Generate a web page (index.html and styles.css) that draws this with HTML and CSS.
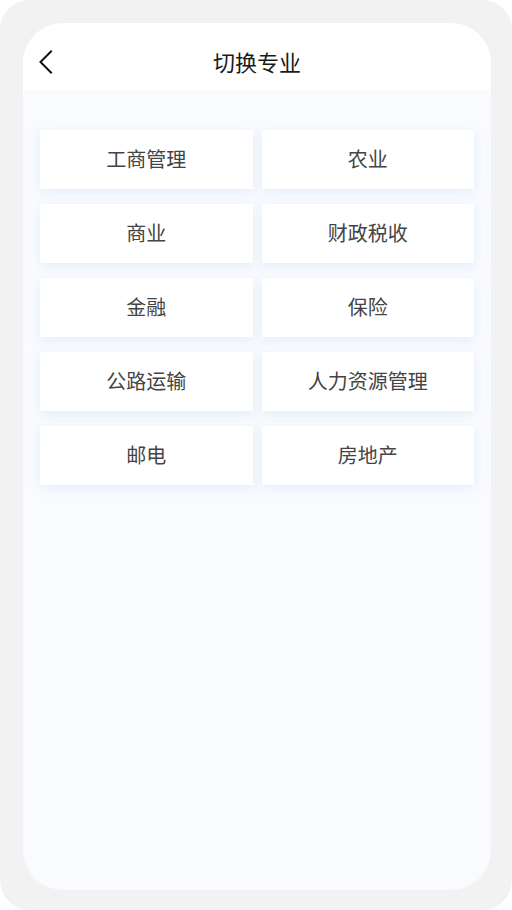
FILE: index.html
```html
<!DOCTYPE html>
<html lang="zh">
<head>
<meta charset="utf-8">
<title>切换专业</title>
<link rel="stylesheet" href="styles.css">
</head>
<body>
<div class="frame">
  <div class="phone">
    <header class="header">
      <div class="back">
        <svg width="16" height="24" viewBox="0 0 16 24" aria-hidden="true">
          <path d="M13 1.5 L2.5 12 L13 22.5" fill="none" stroke="#111" stroke-width="2" stroke-linecap="square" stroke-linejoin="miter"/>
        </svg>
      </div>
      <h1 class="title">切换专业</h1>
      <div class="spacer"></div>
    </header>
    <main class="grid">
      <div class="card">工商管理</div>
      <div class="card">农业</div>
      <div class="card">商业</div>
      <div class="card">财政税收</div>
      <div class="card">金融</div>
      <div class="card">保险</div>
      <div class="card">公路运输</div>
      <div class="card">人力资源管理</div>
      <div class="card">邮电</div>
      <div class="card">房地产</div>
    </main>
  </div>
</div>
</body>
</html>
```
FILE: styles.css
```css
* { box-sizing: border-box; }
html, body { margin: 0; padding: 0; background: #ffffff; }
body {
  font-family: "Noto Sans CJK SC", "Noto Sans", sans-serif;
}
.frame {
  width: 512px;
  height: 910px;
  background: #f2f2f2;
  border-radius: 30px;
  padding: 23px 21px 20px 23px;
}
.phone {
  width: 468px;
  height: 867px;
  background: #f9fbfe;
  border-radius: 40px;
  overflow: hidden;
  display: flex;
  flex-direction: column;
}
.header {
  height: 67px;
  background: #ffffff;
  display: grid;
  grid-template-columns: 1fr auto 1fr;
  align-items: center;
  padding: 10px 15px 0 15px;
}
.back { display: flex; align-items: center; padding-top: 1px; }
.back svg { display: block; }
.title {
  margin: 0 0 2px 0;
  font-size: 22px;
  font-weight: 400;
  color: #1a1a1a;
  line-height: 30px;
}
.grid {
  display: grid;
  grid-template-columns: 1fr 1fr;
  gap: 15px 9px;
  padding: 40px 17px 0 17px;
}
.card {
  height: 59px;
  padding-bottom: 2px;
  background: #ffffff;
  display: flex;
  align-items: center;
  justify-content: center;
  font-size: 20px;
  color: #444444;
  box-shadow: 0 3px 10px rgba(214, 226, 248, 0.55);
}
```
